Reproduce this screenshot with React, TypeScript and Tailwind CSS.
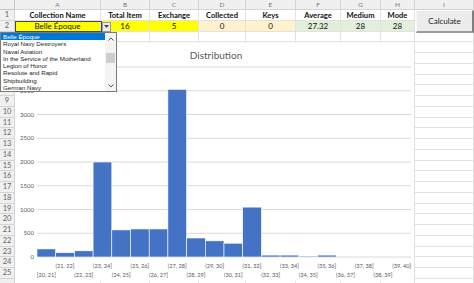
import React from 'react';

const colW = ['w-[15px]', 'w-[86px]', 'w-[49px]', 'w-[49px]', 'w-[47px]', 'w-[50px]', 'w-[45px]', 'w-[40px]', 'w-[34px]', 'w-[59px]'];
const letters = ['A', 'B', 'C', 'D', 'E', 'F', 'G', 'H', 'I'];
const headerTexts = ['Collection Name', 'Total Item', 'Exchange', 'Collected', 'Keys', 'Average', 'Medium', 'Mode', ''];
const row2 = [
  { t: 'Belle Époque', bg: 'bg-[#ffff00]' },
  { t: '16', bg: 'bg-[#ffff00]' },
  { t: '5', bg: 'bg-[#ffff00]' },
  { t: '0', bg: 'bg-[#fff2cc]' },
  { t: '0', bg: 'bg-[#fff2cc]' },
  { t: '27.32', bg: 'bg-[#e2efda]' },
  { t: '28', bg: 'bg-[#e2efda]' },
  { t: '28', bg: 'bg-[#e2efda]' },
  { t: '', bg: 'bg-white' },
];

const items = [
  'Belle Époque',
  'Royal Navy Destroyers',
  'Naval Aviation',
  'In the Service of the Motherland',
  'Legion of Honor',
  'Resolute and Rapid',
  'Shipbuilding',
  'German Navy',
];

const data = [170, 90, 130, 2000, 570, 590, 590, 3530, 400, 340, 290, 1050, 40, 40, 20, 40, 0, 0, 0, 0];

function Chart() {
  const x0 = 37;
  const bw = 18.7;
  const y0 = 257;
  const k = 0.0475;
  const grid = [0, 500, 1000, 1500, 2000, 2500, 3000, 3500, 4000];
  return (
    <div className="absolute left-[15px] top-[43px] w-[399px] h-[238px] bg-white">
      <svg width="399" height="238" viewBox="15 43 399 238" className="block">
        <text x="216" y="59" textAnchor="middle" fontFamily="Lato, 'Liberation Sans', sans-serif" fontSize="10" fill="#595959">
          Distribution
        </text>
        {grid.map((v) => (
          <g key={v}>
            <line x1={x0} x2={411} y1={y0 - v * k} y2={y0 - v * k} stroke="#d9d9d9" strokeWidth="1" />
            <text x="34" y={y0 - v * k + 2} textAnchor="end" fontFamily="Lato, 'Liberation Sans', sans-serif" fontSize="6" fill="#595959">
              {v}
            </text>
          </g>
        ))}
        {data.map((v, i) =>
          v > 0 ? (
            <rect key={i} x={x0 + i * bw} y={y0 - v * k} width={bw} height={v * k} fill="#4472c4" stroke="#ffffff" strokeWidth="0.6" />
          ) : null
        )}
        {data.map((_, i) => (
          <text
            key={'l' + i}
            x={x0 + (i + 0.5) * bw}
            y={i % 2 === 1 ? 268 : 276.5}
            textAnchor="middle"
            fontFamily="Lato, 'Liberation Sans', sans-serif"
            fontSize="5.6"
            fill="#595959"
          >
            {i === 0 ? '[20, 21]' : `(${20 + i}, ${21 + i}]`}
          </text>
        ))}
      </svg>
    </div>
  );
}

export default function App() {
  const rows = Array.from({ length: 26 }, (_, i) => i + 1);
  return (
    <div className="relative w-[474px] h-[283px] overflow-hidden bg-white font-['Lato','Liberation_Sans',sans-serif] text-[#111]">
      {/* column header */}
      <div className="flex h-[10px]">
        <div className={`${colW[0]} shrink-0 bg-[#f0f0f0] border-r border-b border-[#c8c8c8]`} />
        {letters.map((l, i) => (
          <div
            key={l}
            className={`${colW[i + 1]} shrink-0 bg-[#f0f0f0] border-r border-b border-[#d4d4d4] text-[6.5px] leading-[9px] text-center text-[#777]`}
          >
            {l}
          </div>
        ))}
      </div>
      {rows.map((r) => (
        <div key={r} className="flex h-[10.75px]">
          <div className={`${colW[0]} shrink-0 bg-[#f0f0f0] border-r border-b border-[#d4d4d4] text-[7.5px] leading-[10px] text-center text-[#666]`}>
            {r <= 25 ? r : ''}
          </div>
          {letters.map((l, i) => {
            if (r === 1) {
              return (
                <div
                  key={l}
                  className={`${colW[i + 1]} shrink-0 border-r border-b border-[#e1e1e1] text-[7.6px] leading-[10px] font-bold text-center whitespace-nowrap overflow-hidden`}
                >
                  {headerTexts[i]}
                </div>
              );
            }
            if (r === 2) {
              return (
                <div
                  key={l}
                  className={`${colW[i + 1]} shrink-0 border-r border-b border-[#e1e1e1] ${row2[i].bg} text-[8px] leading-[10px] text-center whitespace-nowrap overflow-hidden`}
                >
                  {row2[i].t}
                </div>
              );
            }
            return <div key={l} className={`${colW[i + 1]} shrink-0 border-r border-b border-[#e1e1e1]`} />;
          })}
        </div>
      ))}

      {/* active cell outline A2 */}
      <div className="absolute left-[15px] top-[20.5px] w-[87px] h-[11.5px] border border-[#4a4a4a] pointer-events-none" />

      {/* chart */}
      <Chart />

      {/* dropdown button */}
      <div className="absolute left-[102px] top-[22px] w-[9px] h-[9.5px] bg-[#ececec] border border-[#9a9a9a] flex items-center justify-center">
        <svg width="5" height="3" viewBox="0 0 5 3">
          <path d="M0 0 L5 0 L2.5 3 Z" fill="#444" />
        </svg>
      </div>

      {/* dropdown list */}
      <div className="absolute left-0 top-[32px] w-[117px] h-[60px] bg-white border border-[#7a7a7a] font-['Liberation_Sans',sans-serif]">
        <div className="flex flex-col w-[104px]">
          {items.map((it, i) => (
            <div
              key={it}
              className={`h-[7.3px] text-[6.2px] leading-[7.3px] pl-[2px] whitespace-nowrap overflow-hidden ${i === 0 ? 'bg-[#0078d7] text-white' : 'text-[#222]'}`}
            >
              {it}
            </div>
          ))}
        </div>
        <div className="absolute right-0 top-0 w-[11px] h-full bg-[#f4f4f4] flex flex-col items-center">
          <div className="h-[11px] flex items-center justify-center">
            <svg width="6" height="4" viewBox="0 0 6 4">
              <path d="M0.5 3.5 L3 1 L5.5 3.5" fill="none" stroke="#555" strokeWidth="1" />
            </svg>
          </div>
          <div className="mt-[9px] w-[9px] h-[10px] bg-[#cdcdcd]" />
          <div className="flex-1" />
          <div className="h-[10px] flex items-center justify-center">
            <svg width="6" height="4" viewBox="0 0 6 4">
              <path d="M0.5 0.5 L3 3 L5.5 0.5" fill="none" stroke="#555" strokeWidth="1" />
            </svg>
          </div>
        </div>
      </div>

      {/* calculate button */}
      <div className="absolute left-[416px] top-[10px] w-[58px] h-[23px] bg-[#ececec] border-t border-l border-[#f8f8f8] border-r-2 border-b-2 border-r-[#7f7f7f] border-b-[#9a9a9a] flex items-center justify-center text-[8px] text-[#222]">
        Calculate
      </div>
    </div>
  );
}
